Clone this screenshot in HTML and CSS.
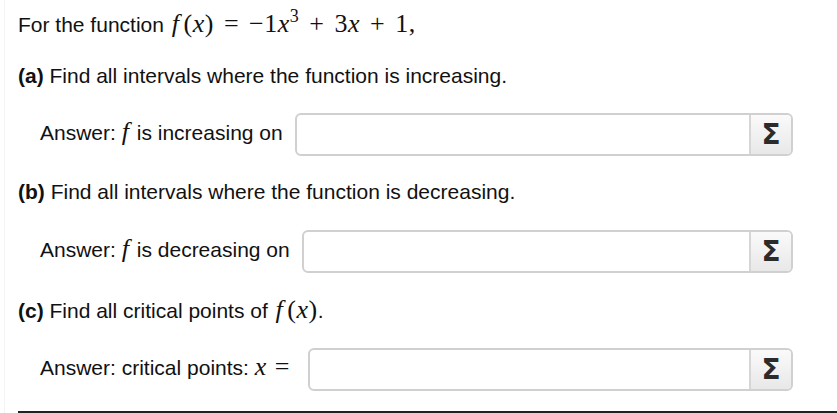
FILE: index.html
```html
<!DOCTYPE html>
<html>
<head>
<meta charset="utf-8">
<link rel="stylesheet" href="styles.css">
</head>
<body>
<div class="page">
  <p class="intro">For the function <span class="math"><i class="mf">f</i>(<i>x</i>)<span class="rel">=</span>−1<i>x</i><sup>3</sup><span class="bin">+</span>3<i>x</i><span class="bin">+</span>1,</span></p>

  <p class="q q-a"><b>(a)</b> Find all intervals where the function is increasing.</p>
  <div class="answer row-a">
    <span class="label">Answer: <i class="mvar">f</i> is increasing on</span>
    <div class="field"><div class="input"></div><button class="sigma">Σ</button></div>
  </div>

  <p class="q q-b"><b>(b)</b> Find all intervals where the function is decreasing.</p>
  <div class="answer row-b">
    <span class="label">Answer: <i class="mvar">f</i> is decreasing on</span>
    <div class="field"><div class="input"></div><button class="sigma">Σ</button></div>
  </div>

  <p class="q q-c"><b>(c)</b> Find all critical points of <span class="math"><i class="mf">f</i>(<i>x</i>)</span>.</p>
  <div class="answer row-c">
    <span class="label">Answer: critical points: <span class="math"><i>x</i><span class="rel rel-tight">=</span></span></span>
    <div class="field"><div class="input"></div><button class="sigma">Σ</button></div>
  </div>

  <hr class="rule">
</div>
</body>
</html>
```
FILE: styles.css
```css
html, body {
  margin: 0;
  padding: 0;
  background: #fff;
}
body {
  font-family: "Liberation Sans", Arial, sans-serif;
  font-size: 21px;
  color: #111;
}
.page {
  margin-left: 4px;
  border-left: 1px solid #f3f3f3;
  padding: 10px 44px 0 13px;
  height: 403px;
  overflow: hidden;
}
p {
  margin: 0;
  height: 30px;
  line-height: 30px;
  white-space: nowrap;
}
.math {
  font-family: "Liberation Serif", "Times New Roman", serif;
  font-size: 26px;
  line-height: 1;
  letter-spacing: 0.5px;
}
.math i, .mvar {
  font-family: "Liberation Serif", "Times New Roman", serif;
  font-style: italic;
}
.mf {
  margin-right: 4px;
  margin-left: 2px;
}
.mvar {
  font-size: 26px;
  line-height: 1;
  margin-right: 2px;
}
.math sup {
  font-size: 18px;
  line-height: 0;
  vertical-align: 10px;
}
.rel {
  margin: 0 10px;
}
.rel-tight {
  margin: 0 6px 0 8px;
}
.bin {
  margin: 0 10px;
}
.q b {
  font-weight: bold;
}
.q-a { margin-top: 21px; }
.q-b { margin-top: 21px; }
.q-c { margin-top: 23px; }
.answer {
  display: flex;
  align-items: center;
  padding-left: 22px;
  gap: 12px;
  height: 43px;
}
.row-a { margin-top: 22px; }
.row-b { margin-top: 23px; }
.row-c { margin-top: 22px; }
.label {
  white-space: nowrap;
  line-height: 30px;
  height: 30px;
  margin-top: -3px;
}
.field {
  flex: 1;
  display: flex;
  height: 43px;
  box-sizing: border-box;
  border: 2px solid #d0d0d0;
  border-radius: 6px;
  overflow: hidden;
  background: #fff;
}
.input {
  flex: 1;
}
.sigma {
  width: 42px;
  border: none;
  border-left: 2px solid #d6d6d6;
  background: linear-gradient(#fafafa, #e8e8e8);
  font-family: "DejaVu Sans", "Liberation Sans", sans-serif;
  font-weight: bold;
  font-size: 28px;
  color: #2b2b2b;
  padding: 0;
}
.rule {
  margin: 20px -44px 0 0;
  border: none;
  border-top: 2px solid #222;
}
```
